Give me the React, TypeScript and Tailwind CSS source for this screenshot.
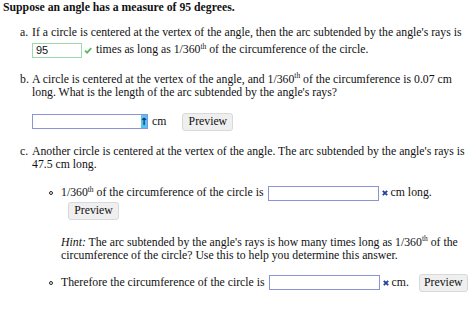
import React from "react";

function Th() {
  return <sup className="text-[7.5px] relative -top-[4.5px] leading-none">th</sup>;
}

function Check() {
  return (
    <svg width="8" height="7" viewBox="0 0 8 7" className="block ml-[2px] mr-[4px]">
      <path d="M1 3.6 L3.1 5.7 L7.2 1.2" stroke="#5cb85c" strokeWidth="1.8" fill="none" />
    </svg>
  );
}

function XMark() {
  return (
    <svg width="6" height="6" viewBox="0 0 6 6" className="block ml-[3px] mr-[3px]">
      <path d="M0.8 0.8 L5.2 5.2 M5.2 0.8 L0.8 5.2" stroke="#24409c" strokeWidth="1.8" />
    </svg>
  );
}

function Input({ w, value, green, arrow }: { w: number; value?: string; green?: boolean; arrow?: boolean }) {
  return (
    <span
      className={
        "flex items-stretch h-[15px] border bg-white " + (green ? "border-[#9ed9ab]" : "border-[#8a93d6]")
      }
      style={{ width: w }}
    >
      <span className="flex-1 pl-[3px] text-[11px] leading-[13px] font-['Liberation_Sans',sans-serif]">{value}</span>
      {arrow && (
        <span className="w-[6px] bg-[#52c6f2] flex items-center justify-center text-[10px] font-bold leading-none font-['DejaVu_Sans',sans-serif] text-[#0b2a6b]">
          ↑
        </span>
      )}
    </span>
  );
}

function PreviewBtn({ w }: { w: number }) {
  return (
    <span
      className="flex items-center justify-center h-[18px] bg-[#efefef] border border-[#d9d9d9] rounded-[3px] text-[11.75px] leading-none"
      style={{ width: w }}
    >
      Preview
    </span>
  );
}

function Bullet() {
  return (
    <span className="w-[29px] shrink-0 flex items-center pl-[17px]">
      <span className="block w-[4px] h-[4px] rounded-full border border-[#222]" />
    </span>
  );
}

export default function App() {
  return (
    <div className="w-[474px] h-[313px] bg-white text-[#111] overflow-hidden font-['Liberation_Serif',serif] text-[11.75px] leading-[13.5px]">
      <div className="pl-[3px] pt-[1px] font-bold leading-[14px]">Suppose an angle has a measure of 95 degrees.</div>

      <div className="flex pl-[20px] pr-[6px] mt-[11px]">
        <span className="w-[12px] shrink-0">a.</span>
        <div className="flex-1">
          <div>If a circle is centered at the vertex of the angle, then the arc subtended by the angle's rays is</div>
          <div className="mt-[2px] flex items-center h-[17px]">
            <Input w={50} value="95" green />
            <Check />
            <span>times as long as 1/360<Th /> of the circumference of the circle.</span>
          </div>
        </div>
      </div>

      <div className="flex pl-[20px] pr-[6px] mt-[14px]">
        <span className="w-[12px] shrink-0">b.</span>
        <div className="flex-1">
          <div>
            A circle is centered at the vertex of the angle, and 1/360<Th /> of the circumference is 0.07 cm long. What is
            the length of the arc subtended by the angle's rays?
          </div>
          <div className="mt-[13px] flex items-center h-[18px]">
            <Input w={116} arrow />
            <span className="ml-[4px]">cm</span>
            <span className="ml-[16px]"><PreviewBtn w={51} /></span>
          </div>
        </div>
      </div>

      <div className="flex pl-[20px] pr-[6px] mt-[14px]">
        <span className="w-[12px] shrink-0">c.</span>
        <div className="flex-1">
          <div>
            Another circle is centered at the vertex of the angle. The arc subtended by the angle's rays is 47.5 cm long.
          </div>
          <div className="mt-[13px] flex items-center h-[17px]">
            <Bullet />
            <span>1/360<Th /> of the circumference of the circle is</span>
            <span className="ml-[4px]"><Input w={111} /></span>
            <XMark />
            <span>cm long.</span>
          </div>
          <div className="pl-[36px] flex"><PreviewBtn w={51} /></div>
          <div className="pl-[29px] mt-[16px]">
            <i>Hint:</i> The arc subtended by the angle's rays is how many times long as 1/360<Th /> of the circumference
            of the circle? Use this to help you determine this answer.
          </div>
          <div className="mt-[11px] flex items-center h-[18px]">
            <Bullet />
            <span>Therefore the circumference of the circle is</span>
            <span className="ml-[4px]"><Input w={111} /></span>
            <XMark />
            <span>cm.</span>
            <span className="ml-[10px]"><PreviewBtn w={49} /></span>
          </div>
        </div>
      </div>
    </div>
  );
}
